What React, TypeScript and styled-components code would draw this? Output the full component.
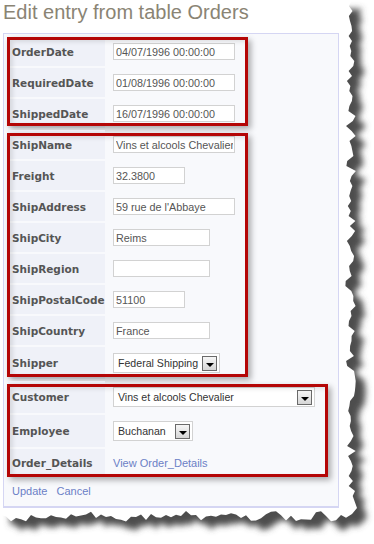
import React from "react";
import styled, { createGlobalStyle } from "styled-components";

const GlobalStyle = createGlobalStyle`
  body {
    margin: 0;
    background: #fff;
    font-family: "Liberation Sans", Arial, sans-serif;
  }
`;

// deterministic wobble for the torn paper edge
let seed = 7;
const rnd = () => {
  seed = (seed * 9301 + 49297) % 233280;
  return seed / 233280 - 0.5;
};

const buildPaper = () => {
  const pts: string[] = ["M0,0", "L352,0"];
  for (let y = 6; y <= 500; y += 5) {
    const x = 352 + rnd() * 8 + (y % 40 < 8 ? -3 : 0);
    pts.push(`L${x.toFixed(1)},${y}`);
  }
  pts.push("L357,508", "L352,514");
  for (let x = 346; x >= 0; x -= 5) {
    const y = 518 + rnd() * 8 + (x % 45 < 8 ? -3 : 0);
    pts.push(`L${x},${y.toFixed(1)}`);
  }
  pts.push("L0,518", "Z");
  return pts.join(" ");
};

const paperPath = buildPaper();

const Page = styled.div`
  position: relative;
  width: 374px;
  height: 544px;
  overflow: hidden;
`;

const Torn = styled.svg`
  position: absolute;
  inset: 0;
`;

const Content = styled.div`
  position: relative;
  padding-left: 3px;
  width: 336px;
`;

const Title = styled.h1`
  margin: 0 0 9px;
  font-family: "Liberation Sans", Arial, sans-serif;
  font-weight: normal;
  font-size: 20px;
  line-height: 24px;
  color: #8a8474;
`;

const Panel = styled.div`
  box-sizing: border-box;
  width: 336px;
  border: 1px solid #d5d6f3;
  border-bottom-width: 2px;
  background: #f8f9fc;
  padding: 3px 4px 0;
`;

const Groups = styled.div`
  display: flex;
  flex-direction: column;
  gap: 2px;
`;

const Group = styled.div`
  position: relative;
  display: flex;
  flex-direction: column;
  gap: 2px;
`;

const Frame = styled.div<{ $top: number; $bottom: number; $width: number }>`
  position: absolute;
  left: -1px;
  top: ${(p) => p.$top}px;
  bottom: ${(p) => p.$bottom}px;
  width: ${(p) => p.$width}px;
  box-sizing: border-box;
  border: 3px solid #b40606;
  box-shadow: 3px 3px 6px rgba(0, 0, 0, 0.32), inset 3px 2px 4px rgba(0, 0, 0, 0.1);
  pointer-events: none;
`;

const Row = styled.div`
  display: grid;
  grid-template-columns: 97px 1fr;
  column-gap: 8px;
`;

const Label = styled.div`
  display: flex;
  align-items: center;
  padding: 0 4px;
  background: #eff1f8;
  font-family: "DejaVu Sans", Tahoma, sans-serif;
  font-weight: bold;
  font-size: 10.5px;
  color: #555;
`;

const Value = styled.div`
  display: flex;
  align-items: center;
  padding: 6px 0;
`;

const TextBox = styled.input<{ $w: number }>`
  box-sizing: border-box;
  width: ${(p) => p.$w}px;
  height: 17px;
  margin: 0;
  padding: 0 1px 0 2px;
  border: 1px solid #d2d2d2;
  background: #fff;
  font-family: "Liberation Sans", Tahoma, sans-serif;
  font-size: 10.8px;
  color: #555;
  outline: none;
`;

const SelectBox = styled.div<{ $w: number }>`
  box-sizing: border-box;
  width: ${(p) => p.$w}px;
  height: 20px;
  display: flex;
  align-items: center;
  justify-content: space-between;
  gap: 3px;
  padding: 0 2px 0 4px;
  border: 1px solid #d2d2d2;
  background: #fff;
  font-family: "Liberation Sans", Tahoma, sans-serif;
  font-size: 10.6px;
  color: #333;
  white-space: nowrap;
  overflow: hidden;
`;

const DropButton = styled.span`
  position: relative;
  flex-shrink: 0;
  box-sizing: border-box;
  width: 15px;
  height: 15px;
  border: 1px solid #6a6a6a;
  background: linear-gradient(#f6f6f6, #d6d6d6);

  &::after {
    content: "";
    position: absolute;
    left: 3px;
    top: 6px;
    border-left: 4px solid transparent;
    border-right: 4px solid transparent;
    border-top: 4px solid #000;
  }
`;

const Link = styled.a`
  font-family: "Liberation Sans", Tahoma, sans-serif;
  font-size: 11px;
  line-height: 16px;
  color: #6b80c6;
  text-decoration: none;
  cursor: pointer;
`;

const Footer = styled.div`
  display: flex;
  gap: 9px;
  padding: 6px 4px 7px;
`;

const Field = ({ label, value, w }: { label: string; value: string; w: number }) => (
  <Row>
    <Label>{label}</Label>
    <Value>
      <TextBox $w={w} defaultValue={value} readOnly />
    </Value>
  </Row>
);

const Choice = ({ label, value, w }: { label: string; value: string; w: number }) => (
  <Row>
    <Label>{label}</Label>
    <Value>
      <SelectBox $w={w}>
        <span>{value}</span>
        <DropButton />
      </SelectBox>
    </Value>
  </Row>
);

export default function App() {
  return (
    <>
      <GlobalStyle />
      <Page>
        <Torn width="374" height="544" viewBox="0 0 374 544">
          <defs>
            <filter id="blur" x="-10%" y="-10%" width="120%" height="120%">
              <feGaussianBlur stdDeviation="3" />
            </filter>
          </defs>
          <path d={paperPath} transform="translate(10,9)" fill="#4e4e4e" filter="url(#blur)" />
          <path d={paperPath} fill="#fff" />
        </Torn>
        <Content>
          <Title>Edit entry from table Orders</Title>
          <Panel>
            <Groups>
              <Group>
                <Field label="OrderDate" value="04/07/1996 00:00:00" w={122} />
                <Field label="RequiredDate" value="01/08/1996 00:00:00" w={122} />
                <Field label="ShippedDate" value="16/07/1996 00:00:00" w={122} />
                <Frame $top={0} $bottom={2} $width={241} />
              </Group>
              <Group>
                <Field label="ShipName" value="Vins et alcools Chevalier" w={122} />
                <Field label="Freight" value="32.3800" w={72} />
                <Field label="ShipAddress" value="59 rue de l'Abbaye" w={122} />
                <Field label="ShipCity" value="Reims" w={97} />
                <Field label="ShipRegion" value="" w={97} />
                <Field label="ShipPostalCode" value="51100" w={72} />
                <Field label="ShipCountry" value="France" w={97} />
                <Choice label="Shipper" value="Federal Shipping" w={107} />
                <Frame $top={3} $bottom={2} $width={241} />
              </Group>
              <Group>
                <Choice label="Customer" value="Vins et alcools Chevalier" w={202} />
                <Choice label="Employee" value="Buchanan" w={80} />
                <Row>
                  <Label>Order_Details</Label>
                  <Value>
                    <Link>View Order_Details</Link>
                  </Value>
                </Row>
                <Frame $top={3} $bottom={0} $width={321} />
              </Group>
            </Groups>
            <Footer>
              <Link>Update</Link>
              <Link>Cancel</Link>
            </Footer>
          </Panel>
        </Content>
      </Page>
    </>
  );
}
